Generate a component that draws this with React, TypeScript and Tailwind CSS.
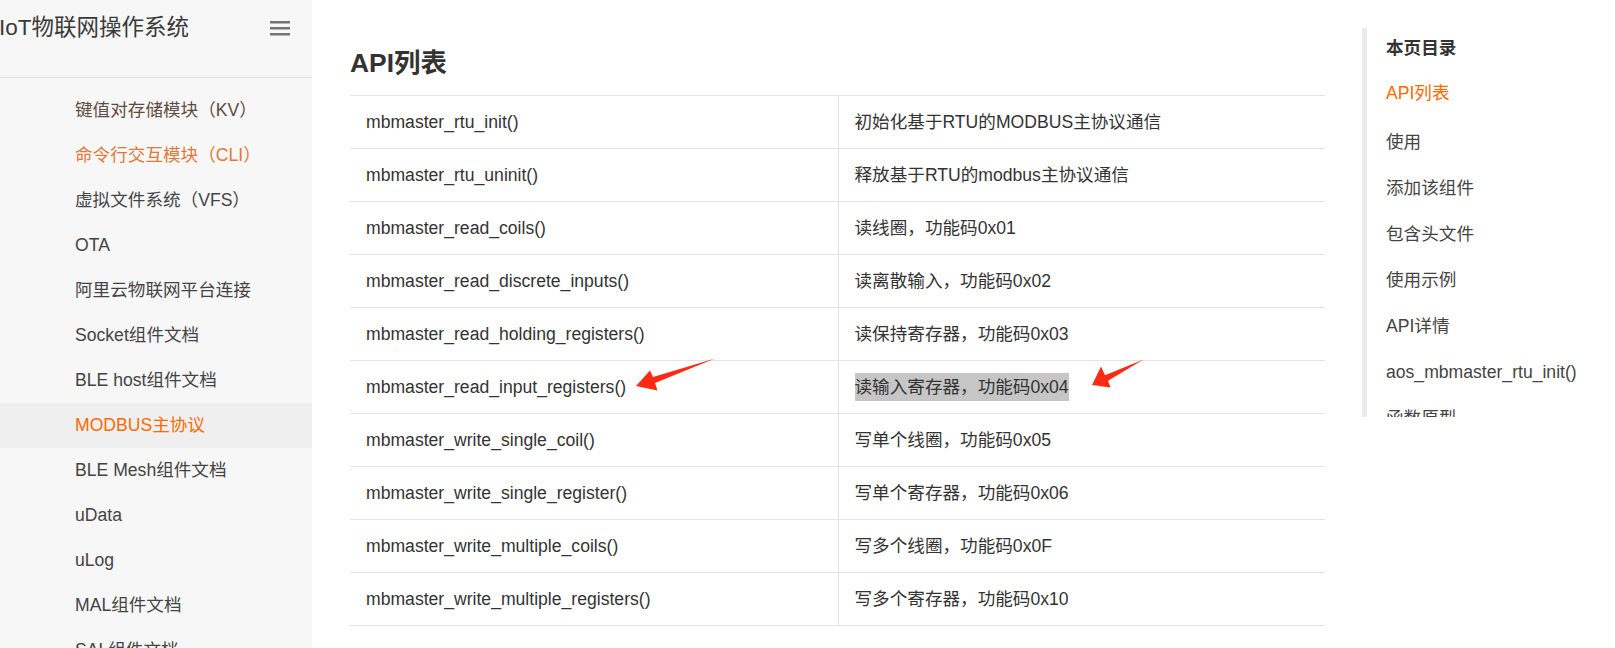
import React from "react";

const menuItems = [
  "键值对存储模块（KV）",
  "命令行交互模块（CLI）",
  "虚拟文件系统（VFS）",
  "OTA",
  "阿里云物联网平台连接",
  "Socket组件文档",
  "BLE host组件文档",
  "MODBUS主协议",
  "BLE Mesh组件文档",
  "uData",
  "uLog",
  "MAL组件文档",
  "SAL组件文档",
];

const apiRows = [
  ["mbmaster_rtu_init()", "初始化基于RTU的MODBUS主协议通信"],
  ["mbmaster_rtu_uninit()", "释放基于RTU的modbus主协议通信"],
  ["mbmaster_read_coils()", "读线圈，功能码0x01"],
  ["mbmaster_read_discrete_inputs()", "读离散输入，功能码0x02"],
  ["mbmaster_read_holding_registers()", "读保持寄存器，功能码0x03"],
  ["mbmaster_read_input_registers()", "读输入寄存器，功能码0x04"],
  ["mbmaster_write_single_coil()", "写单个线圈，功能码0x05"],
  ["mbmaster_write_single_register()", "写单个寄存器，功能码0x06"],
  ["mbmaster_write_multiple_coils()", "写多个线圈，功能码0x0F"],
  ["mbmaster_write_multiple_registers()", "写多个寄存器，功能码0x10"],
];

const tocItems = [
  "使用",
  "添加该组件",
  "包含头文件",
  "使用示例",
  "API详情",
  "aos_mbmaster_rtu_init()",
  "函数原型",
];

function menuColor(index: number) {
  if (index === 7) return "text-[#ff6a00]";
  if (index === 1) return "text-[#e27838]";
  if (index === 0) return "text-[#5e4c42]";
  return "text-[#444]";
}

function Sidebar() {
  return (
    <aside className="w-[312px] shrink-0 h-full bg-[#f7f7f7]">
      {/* header */}
      <div className="h-[78px] border-b border-[#e3e3e3] flex items-start justify-between pt-[12px] pr-[22px]">
        <span className="-ml-[1px] text-[22.5px] leading-[32px] text-[#3a3a3a]">
          IoT物联网操作系统
        </span>
        <svg width="20" height="16" viewBox="0 0 20 16" className="mt-[9px]">
          <rect x="0" y="0" width="20" height="2.5" fill="#757575" />
          <rect x="0" y="6" width="20" height="2.5" fill="#757575" />
          <rect x="0" y="12" width="20" height="2.5" fill="#757575" />
        </svg>
      </div>

      <ul className="pt-[10px]">
        {menuItems.map((item, index) => (
          <li
            key={item}
            className={`h-[45px] flex items-center pl-[75px] text-[17.6px] ${menuColor(index)} ${
              index === 7 ? "bg-[#efefef]" : ""
            }`}
          >
            {item}
          </li>
        ))}
      </ul>
    </aside>
  );
}

function ApiTable() {
  return (
    <table className="w-[975px] border-collapse text-[17.6px] text-[#333]">
      <tbody>
        {apiRows.map(([name, desc], index) => (
          <tr key={name} className="h-[53px] border-y border-[#e4e4e4]">
            <td className="w-[488px] px-[16px] border-r border-[#e4e4e4]">
              {name}
            </td>
            <td className="px-[16px]">
              {index === 5 ? (
                <span className="inline-block bg-[#c6c6c6] leading-[28px]">
                  {desc}
                </span>
              ) : (
                desc
              )}
            </td>
          </tr>
        ))}
      </tbody>
    </table>
  );
}

function Toc() {
  return (
    <nav className="mt-[28px] h-[389px] overflow-hidden border-l-[5px] border-[#ebebeb] text-[17.6px] text-[#444]">
      <div className="h-[40px] flex items-center pl-[19px] font-bold text-[#333]">
        本页目录
      </div>
      <div className="relative h-[51px] flex items-center pl-[19px] text-[#ff6a00]">
        <span className="absolute -left-[5px] top-0 h-full w-[5px] bg-[#ff6a00]" />
        API列表
      </div>
      {tocItems.map((item) => (
        <div key={item} className="h-[46px] flex items-center pl-[19px]">
          {item}
        </div>
      ))}
    </nav>
  );
}

export default function App() {
  return (
    <div
      className="relative flex h-screen w-full overflow-hidden bg-white"
      style={{ fontFamily: '"Liberation Sans", "Noto Sans CJK SC", sans-serif' }}
    >
      <Sidebar />

      <main className="pl-[38px] pt-[44px]">
        <h2 className="text-[26.4px] leading-[38px] font-bold text-[#333] mb-[13px]">
          API列表
        </h2>
        <ApiTable />
      </main>

      <div className="ml-[37px] flex-1">
        <Toc />
      </div>

      {/* red annotation arrows */}
      <svg
        className="absolute left-0 top-0 pointer-events-none"
        width="1615"
        height="648"
        viewBox="0 0 1615 648"
      >
        <polygon
          points="636,386 650,370.5 653,377 715,358.5 655,383 657.5,390.5"
          fill="#fe2a14"
        />
        <polygon
          points="1092,385 1101,366.5 1105,375.3 1143.5,359.5 1108,380.8 1110.5,387.5"
          fill="#fe2a14"
        />
      </svg>
    </div>
  );
}
